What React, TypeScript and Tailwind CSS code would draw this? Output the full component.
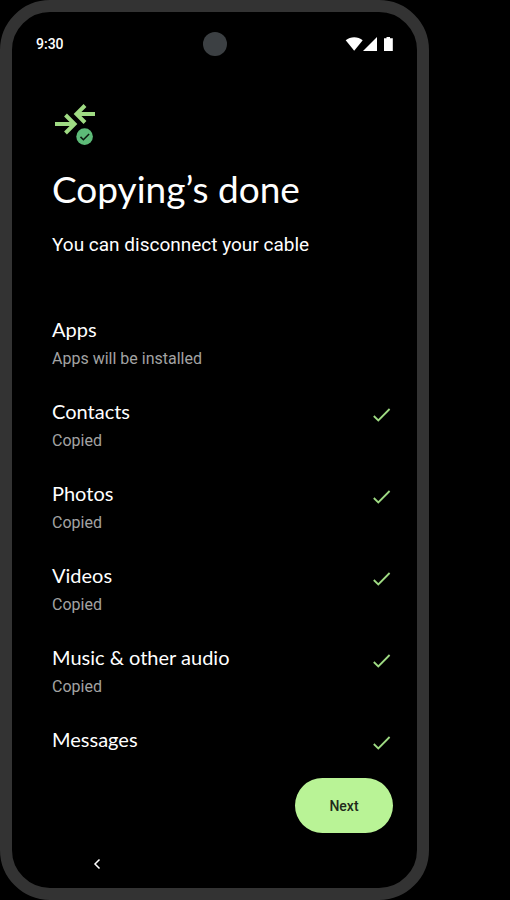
type Item = { title: string; detail?: string; done: boolean };

const items: Item[] = [
  { title: "Apps", detail: "Apps will be installed", done: false },
  { title: "Contacts", detail: "Copied", done: true },
  { title: "Photos", detail: "Copied", done: true },
  { title: "Videos", detail: "Copied", done: true },
  { title: "Music & other audio", detail: "Copied", done: true },
  { title: "Messages", done: true },
];

function StatusIcons() {
  return (
    <svg className="h-4 w-12" viewBox="0 0 48 16" fill="#fff" aria-hidden="true">
      <path d="M0.7 4.2C5.5 0.2 12.9 0.2 17.7 4.2L9.2 14.8Z" />
      <path d="M18 15H32V1Z" />
      <path d="M39 2.2H41.5V1H45V2.2H47.8V15H39Z" />
    </svg>
  );
}

function TransferIcon() {
  return (
    <svg className="h-[42px] w-11" viewBox="0 0 44 42" fill="none" aria-hidden="true">
      <g stroke="#9fdb83" strokeWidth="4">
        <path d="M3 21H23" />
        <path d="M13.5 12L22.5 21L13.5 30" />
        <path d="M43 11H24" />
        <path d="M33 2.5L24.5 11L33 19.5" />
      </g>
      <circle cx="32.6" cy="33.6" r="8.3" fill="#5dbb78" />
      <path d="M28.5 33.9L31.4 36.8L37.1 30.9" stroke="#0b1a10" strokeWidth="1.5" />
    </svg>
  );
}

function Check() {
  return (
    <svg className="h-4 w-5 shrink-0" viewBox="0 0 20 16" fill="none" role="img" aria-label="Done">
      <path d="M0.8 9L5.3 13.5L16.6 2" stroke="#9fdb83" strokeWidth="1.8" />
    </svg>
  );
}

export default function App() {
  return (
    <div className="min-h-screen bg-black font-['Lato','Open_Sans',sans-serif] text-white">
      <div className="relative flex min-h-screen w-full max-w-[429px] flex-col rounded-[50px] border-12 border-[#333333] bg-black">
        <div className="absolute top-5 left-1/2 size-6 -translate-x-1/2 rounded-full bg-[#3c4043]" />
        <header className="flex items-center justify-between px-6 pt-6">
          <time className="font-['Roboto',sans-serif] text-sm leading-4 font-medium">9:30</time>
          <StatusIcons />
        </header>

        <main className="flex flex-1 flex-col pt-[51px] pr-6 pl-10">
          <div>
            <TransferIcon />
          </div>
          <h1 className="mt-5 text-[37px] leading-12">Copying’s done</h1>
          <p className="mt-5 font-['Roboto',sans-serif] text-[19px] leading-6">You can disconnect your cable</p>

          <ul className="mt-[58px]">
            {items.map((item) => (
              <li key={item.title} className="flex h-[82px] items-start justify-between last:h-[53px]">
                <div>
                  <h2 className="text-xl leading-7">{item.title}</h2>
                  {item.detail && (
                    <p className="font-['Roboto',sans-serif] text-base leading-8 text-[#a3a3a3]">
                      {item.detail}
                    </p>
                  )}
                </div>
                {item.done && (
                  <div className="pt-2.5">
                    <Check />
                  </div>
                )}
              </li>
            ))}
          </ul>

          <div className="flex justify-end">
            <button
              type="button"
              className="h-[55px] w-[98px] rounded-full bg-[#b9f396] font-['Roboto',sans-serif] text-sm font-medium text-[#1f2a1b]"
            >
              Next
            </button>
          </div>
        </main>

        <nav className="flex px-20 pb-4">
          <button type="button" aria-label="Back" className="flex size-4 items-center">
            <svg className="h-3 w-3" viewBox="0 0 12 12" fill="none" aria-hidden="true">
              <path d="M7.5 1.5L3 6L7.5 10.5" stroke="#fff" strokeWidth="1.5" />
            </svg>
          </button>
        </nav>
      </div>
    </div>
  );
}
